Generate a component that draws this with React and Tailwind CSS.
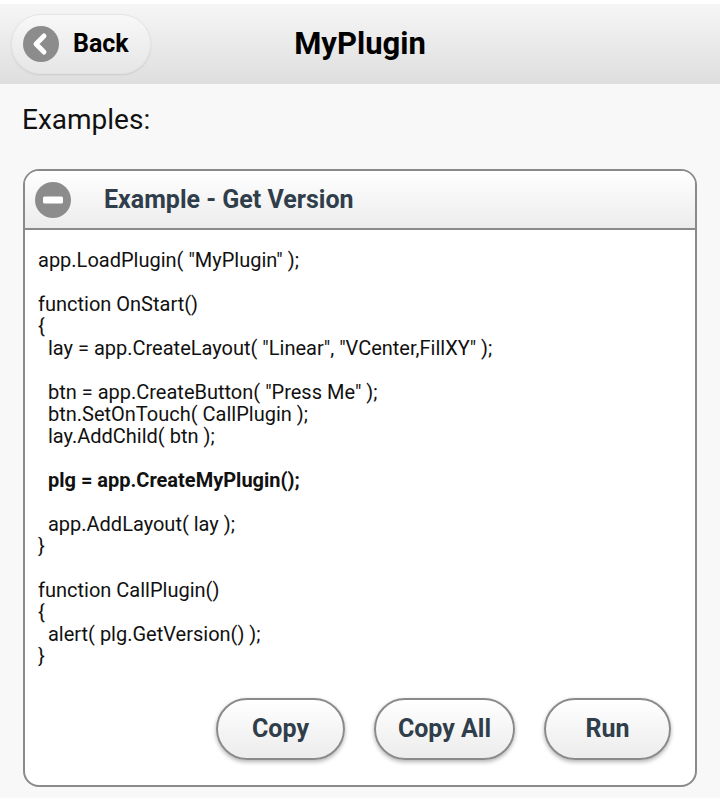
export default function App() {
  const lines = [
    ['app.LoadPlugin( "MyPlugin" );'],
    [''],
    ['function OnStart()'],
    ['{'],
    ['  lay = app.CreateLayout( "Linear", "VCenter,FillXY" );'],
    [''],
    ['  btn = app.CreateButton( "Press Me" );'],
    ['  btn.SetOnTouch( CallPlugin );'],
    ['  lay.AddChild( btn );'],
    [''],
    ['  plg = app.CreateMyPlugin();', true],
    [''],
    ['  app.AddLayout( lay );'],
    ['}'],
    [''],
    ['function CallPlugin()'],
    ['{'],
    ['  alert( plg.GetVersion() );'],
    ['}'],
  ];
  const btn = "h-[62px] rounded-[31px] border-2 border-[#8a8a8a] bg-gradient-to-b from-white to-[#ececec] shadow-[0_2px_4px_rgba(0,0,0,0.3)] text-[25px] font-bold text-[#2f3e4a] flex items-center justify-center";
  return (
    <div className="w-[720px] h-[798px] bg-[#f8f8f8] overflow-hidden" style={{ fontFamily: 'Roboto, sans-serif' }}>
      <div className="h-[4px] bg-white" />
      <div className="h-[80px] bg-gradient-to-b from-[#f6f6f6] to-[#dedede] relative flex items-center">
        <div className="ml-[11px] w-[140px] h-[60px] rounded-[30px] border border-[#e4e4e4] bg-gradient-to-b from-[#f8f8f8] to-[#e6e6e6] flex items-center pl-[11px] gap-[14px] shadow-[0_1px_2px_rgba(0,0,0,0.1)]">
          <svg width="36" height="36" viewBox="0 0 36 36">
            <circle cx="18" cy="18" r="18" fill="#8c8c8c" />
            <path d="M21 10 L13 18 L21 26" stroke="white" strokeWidth="5" fill="none" strokeLinecap="round" strokeLinejoin="round" />
          </svg>
          <span className="text-[25px] font-bold text-black">Back</span>
        </div>
        <div className="absolute left-0 right-0 text-center text-[31px] font-bold text-black pointer-events-none">MyPlugin</div>
      </div>
      <div className="pl-[22px] pt-[18px] text-[28px] text-[#111] leading-[36px]">Examples:</div>
      <div className="mx-[23px] mt-[31px] h-[618px] rounded-[16px] border-2 border-[#8a8a8a] bg-white overflow-hidden flex flex-col">
        <div className="h-[59px] shrink-0 bg-gradient-to-b from-white to-[#ececec] border-b-2 border-[#8a8a8a] flex items-center pl-[10px]">
          <svg width="36" height="36" viewBox="0 0 36 36">
            <circle cx="18" cy="18" r="18" fill="#8c8c8c" />
            <rect x="8" y="14.5" width="20" height="7" rx="1.5" fill="white" />
          </svg>
          <span className="ml-[33px] text-[25px] font-bold text-[#2f3e4a]">Example - Get Version</span>
        </div>
        <div className="pl-[13px] pt-[19px] text-[20px] leading-[22px] text-[#111] whitespace-pre">
          {lines.map(([t, b], i) => (
            <div key={i} className={b ? 'font-bold h-[22px]' : 'h-[22px]'}>{t}</div>
          ))}
        </div>
        <div className="flex justify-end gap-[29px] pr-[24px] mt-[31px]">
          <div className={btn + " w-[129px]"}>Copy</div>
          <div className={btn + " w-[141px]"}>Copy All</div>
          <div className={btn + " w-[127px]"}>Run</div>
        </div>
      </div>
    </div>
  );
}
